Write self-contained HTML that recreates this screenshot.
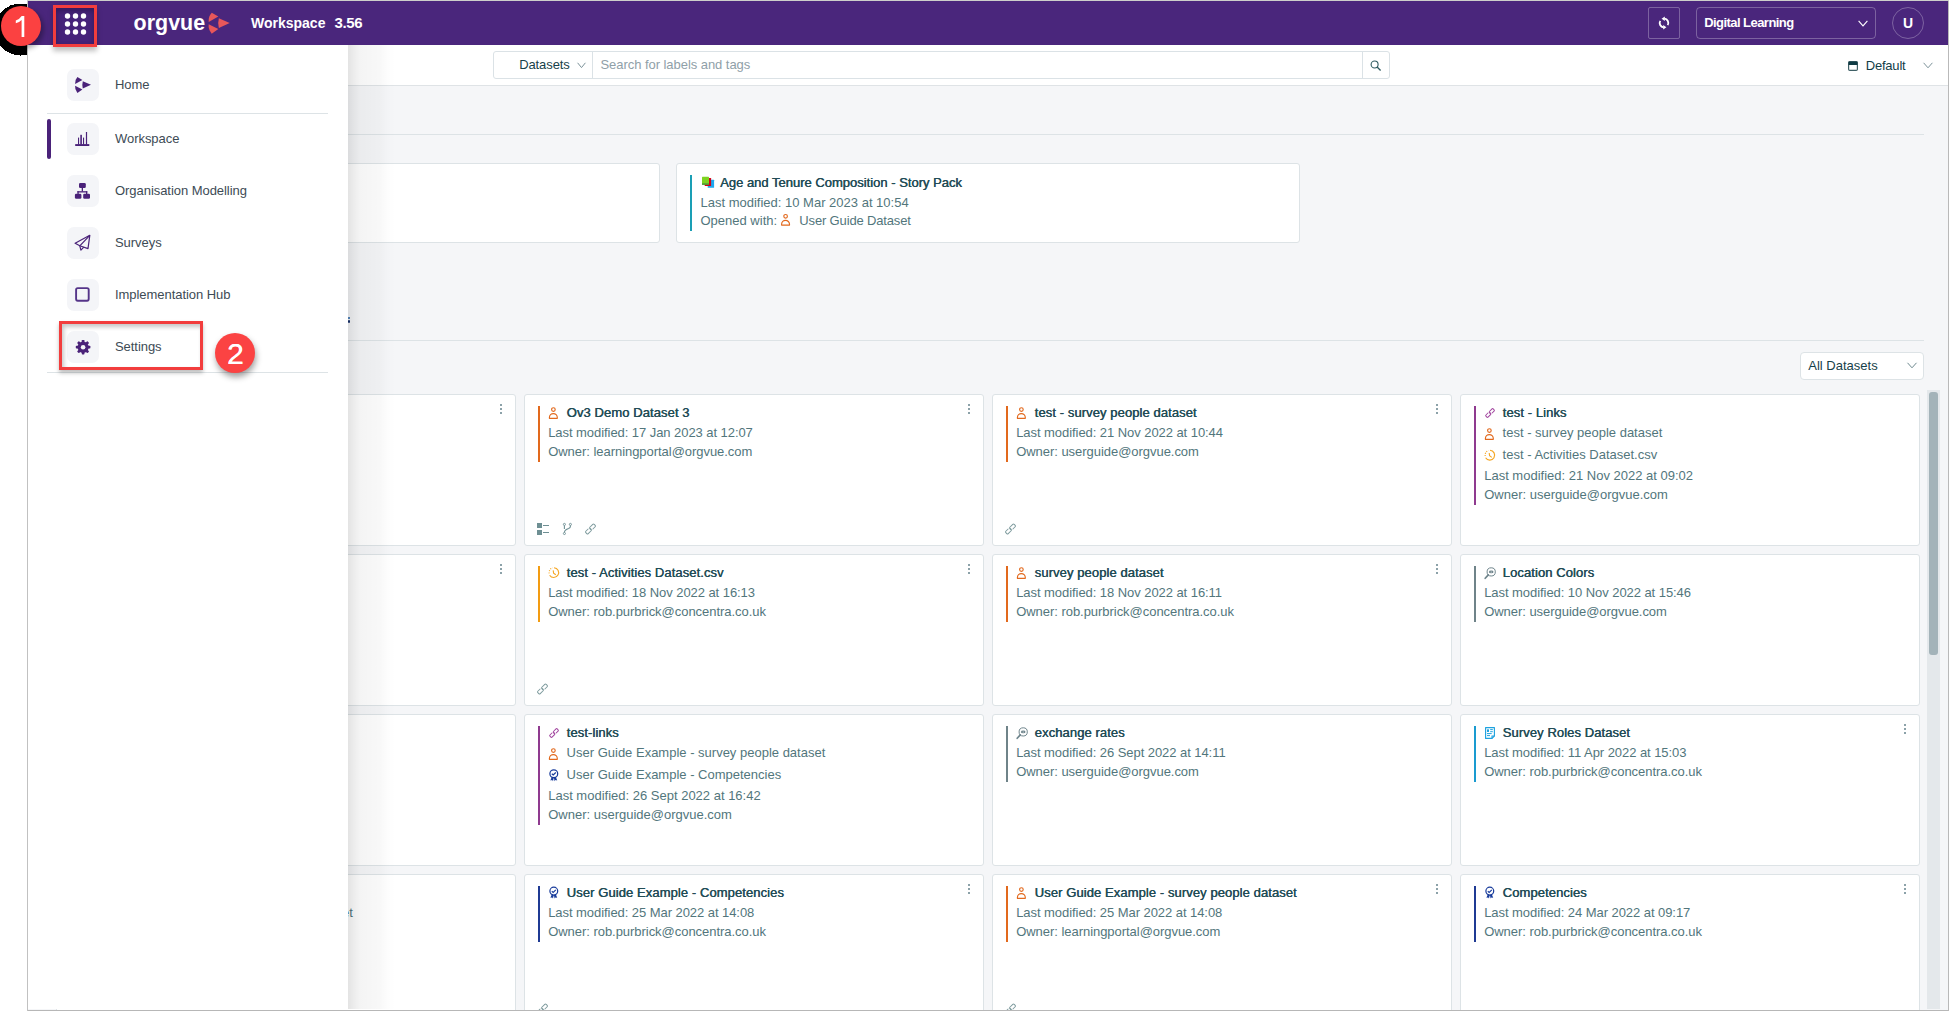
<!DOCTYPE html>
<html><head><meta charset="utf-8">
<style>
html,body{margin:0;padding:0;}
body{width:1949px;height:1011px;position:relative;overflow:hidden;background:#fff;font-family:"Liberation Sans", sans-serif;}
.t{position:absolute;white-space:nowrap;line-height:16px;}
.i{position:absolute;overflow:visible;}
.card{position:absolute;box-sizing:border-box;background:#fff;border:1px solid #dde3e6;border-radius:3px;}
.acc{position:absolute;width:2px;}
.abs{position:absolute;}
</style></head><body>
<!-- black artifact behind annotation 1 -->
<svg class="i" style="left:0;top:0" width="28" height="60" shape-rendering="crispEdges"><circle cx="20.5" cy="29.5" r="26" fill="#000"/></svg>
<!-- frame -->
<div class="abs" style="left:27px;top:0;width:1922px;height:1011px;box-sizing:border-box;border:1px solid #a8a8a8;background:#f5f6f8"></div>
<!-- header -->
<div class="abs" style="left:28px;top:1px;width:1920px;height:44px;background:#4a267c"></div>
<!-- subbar -->
<div class="abs" style="left:28px;top:45px;width:1920px;height:40px;background:#fff;border-bottom:1px solid #dfe3e6"></div>

<!-- content -->
<div class="abs" style="left:56px;top:134px;width:1868px;height:1px;background:#dde3e6"></div>
<div class="card" style="left:56px;top:163px;width:604px;height:80px"></div>
<div class="card" style="left:676px;top:163px;width:624px;height:80px"></div>
<div class="acc" style="left:690px;top:175px;height:56px;background:#1a9fb5"></div>
<svg class="i" style="left:702px;top:176px;" width="14" height="12" viewBox="0 0 14 12"><g transform="translate(0.00 0.80)"><rect x="5.7" y="2.9" width="6.4" height="8" rx="0.5" fill="#1ea7ef"/><rect x="2.7" y="1.2" width="6.4" height="8" rx="0.5" fill="#d0021b"/><rect x="0" y="0" width="7" height="8" rx="0.5" fill="#7ed321"/><rect x="0" y="6.6" width="7" height="1.4" fill="#4a8f3a"/></g></svg>
<div class="t" style="left:720px;top:174.80px;font-size:13px;color:#224c56;font-weight:normal;letter-spacing:0px;text-shadow:0.4px 0 0 #224c56;">Age and Tenure Composition - Story Pack</div>
<div class="t" style="left:700.5px;top:195.30px;font-size:13px;color:#52767c;font-weight:normal;letter-spacing:0px;">Last modified: 10 Mar 2023 at 10:54</div>
<div class="t" style="left:700.5px;top:213.00px;font-size:13px;color:#52767c;font-weight:normal;letter-spacing:0px;">Opened with:</div>
<svg class="i" style="left:781px;top:214px;" width="10" height="12" viewBox="0 0 10 12"><circle cx="4.6" cy="2.3" r="1.8" fill="none" stroke="#e2691d" stroke-width="1.15"/><path d="M0.6 11.1 V10.3 A3.95 3.95 0 0 1 8.5 10.3 V11.1 Z" fill="none" stroke="#e2691d" stroke-width="1.15" stroke-linejoin="round"/></svg>
<div class="t" style="left:799.3px;top:213.00px;font-size:13px;color:#52767c;font-weight:normal;letter-spacing:-0.15px;">User Guide Dataset</div>
<div class="abs" style="left:56px;top:340px;width:1868px;height:1px;background:#dde3e6"></div>
<div class="abs" style="left:1800px;top:352px;width:124px;height:28px;box-sizing:border-box;border:1px solid #dde3e6;border-radius:4px;background:#fff"></div>
<div class="t" style="left:1808.3px;top:358.00px;font-size:13px;color:#163f4a;font-weight:normal;letter-spacing:0px;">All Datasets</div>
<svg class="i" style="left:1907px;top:362px" width="10" height="7"><path d="M0.5 0.8 L5 5.8 L9.5 0.8" fill="none" stroke="#6f8a90" stroke-width="1"/></svg>
<div class="card" style="left:56px;top:394px;width:460px;height:152px"></div>
<svg class="i" style="left:500px;top:404px;" width="2" height="10" viewBox="0 0 2 10"><rect x="0" y="0" width="2" height="2" fill="#8ca2a9"/><rect x="0" y="4" width="2" height="2" fill="#8ca2a9"/><rect x="0" y="8" width="2" height="2" fill="#8ca2a9"/></svg>
<div class="card" style="left:524px;top:394px;width:460px;height:152px"></div>
<svg class="i" style="left:968px;top:404px;" width="2" height="10" viewBox="0 0 2 10"><rect x="0" y="0" width="2" height="2" fill="#8ca2a9"/><rect x="0" y="4" width="2" height="2" fill="#8ca2a9"/><rect x="0" y="8" width="2" height="2" fill="#8ca2a9"/></svg>
<div class="acc" style="left:538px;top:406px;height:56px;background:#e2691d"></div>
<svg class="i" style="left:548px;top:407px;" width="10" height="12" viewBox="0 0 10 12"><g transform="translate(0.80 0.20)"><circle cx="4.6" cy="2.3" r="1.8" fill="none" stroke="#e2691d" stroke-width="1.15"/><path d="M0.6 11.1 V10.3 A3.95 3.95 0 0 1 8.5 10.3 V11.1 Z" fill="none" stroke="#e2691d" stroke-width="1.15" stroke-linejoin="round"/></g></svg>
<div class="t" style="left:566.6px;top:405.00px;font-size:13px;color:#224c56;font-weight:normal;letter-spacing:0.08px;text-shadow:0.4px 0 0 #224c56;">Ov3 Demo Dataset 3</div>
<div class="t" style="left:548.2px;top:424.50px;font-size:13px;color:#52767c;font-weight:normal;letter-spacing:-0.06px;">Last modified: 17 Jan 2023 at 12:07</div>
<div class="t" style="left:548.2px;top:444.00px;font-size:13px;color:#52767c;font-weight:normal;letter-spacing:-0.04px;">Owner: learningportal@orgvue.com</div>
<svg class="i" style="left:537px;top:523px;" width="12" height="12" viewBox="0 0 12 12"><rect x="0" y="0" width="5" height="5" fill="#6e8f93"/><rect x="0" y="7" width="5" height="5" fill="#6e8f93"/><path d="M6 2.5 H12 M6 9.5 H12" stroke="#6e8f93" stroke-width="1.1"/></svg>
<svg class="i" style="left:563px;top:523px;" width="10" height="13" viewBox="0 0 10 13"><circle cx="1.4" cy="1.4" r="1.05" fill="none" stroke="#6e8f93" stroke-width="0.9"/><circle cx="7.4" cy="1.4" r="1.05" fill="none" stroke="#6e8f93" stroke-width="0.9"/><circle cx="1.4" cy="10.5" r="1.05" fill="none" stroke="#6e8f93" stroke-width="0.9"/><path d="M1.4 2.5 V6 M7.4 2.5 V3.6 Q7.4 4.8 5.6 5.6 Q1.6 7 1.4 9.4" fill="none" stroke="#6e8f93" stroke-width="1.1"/></svg>
<svg class="i" style="left:584px;top:523px;" width="12" height="12" viewBox="0 0 12 12"><g transform="translate(0.50 0.00)"><g transform="scale(1.0) rotate(-45 6 6)" fill="none" stroke="#7d9a9d" stroke-width="1.00" stroke-linecap="round"><path d="M4.3 4.3 H1.1 Q0.1 4.3 0.1 5.3 V6.7 Q0.1 7.7 1.1 7.7 H5.2 Q6.2 7.7 6.2 6.7 V5.7"/><path d="M7.7 7.7 H10.9 Q11.9 7.7 11.9 6.7 V5.3 Q11.9 4.3 10.9 4.3 H6.8 Q5.8 4.3 5.8 5.3 V6.3"/></g></g></svg>
<div class="card" style="left:992px;top:394px;width:460px;height:152px"></div>
<svg class="i" style="left:1436px;top:404px;" width="2" height="10" viewBox="0 0 2 10"><rect x="0" y="0" width="2" height="2" fill="#8ca2a9"/><rect x="0" y="4" width="2" height="2" fill="#8ca2a9"/><rect x="0" y="8" width="2" height="2" fill="#8ca2a9"/></svg>
<div class="acc" style="left:1006px;top:406px;height:56px;background:#e2691d"></div>
<svg class="i" style="left:1016px;top:407px;" width="10" height="12" viewBox="0 0 10 12"><g transform="translate(0.80 0.20)"><circle cx="4.6" cy="2.3" r="1.8" fill="none" stroke="#e2691d" stroke-width="1.15"/><path d="M0.6 11.1 V10.3 A3.95 3.95 0 0 1 8.5 10.3 V11.1 Z" fill="none" stroke="#e2691d" stroke-width="1.15" stroke-linejoin="round"/></g></svg>
<div class="t" style="left:1034.6px;top:405.00px;font-size:13px;color:#224c56;font-weight:normal;letter-spacing:0.08px;text-shadow:0.4px 0 0 #224c56;">test - survey people dataset</div>
<div class="t" style="left:1016.2px;top:424.50px;font-size:13px;color:#52767c;font-weight:normal;letter-spacing:-0.06px;">Last modified: 21 Nov 2022 at 10:44</div>
<div class="t" style="left:1016.2px;top:444.00px;font-size:13px;color:#52767c;font-weight:normal;letter-spacing:-0.04px;">Owner: userguide@orgvue.com</div>
<svg class="i" style="left:1004px;top:523px;" width="12" height="12" viewBox="0 0 12 12"><g transform="translate(0.50 0.00)"><g transform="scale(1.0) rotate(-45 6 6)" fill="none" stroke="#7d9a9d" stroke-width="1.00" stroke-linecap="round"><path d="M4.3 4.3 H1.1 Q0.1 4.3 0.1 5.3 V6.7 Q0.1 7.7 1.1 7.7 H5.2 Q6.2 7.7 6.2 6.7 V5.7"/><path d="M7.7 7.7 H10.9 Q11.9 7.7 11.9 6.7 V5.3 Q11.9 4.3 10.9 4.3 H6.8 Q5.8 4.3 5.8 5.3 V6.3"/></g></g></svg>
<div class="card" style="left:1460px;top:394px;width:460px;height:152px"></div>
<div class="acc" style="left:1474px;top:406px;height:99px;background:#8f3a8f"></div>
<svg class="i" style="left:1484px;top:407px;" width="12" height="12" viewBox="0 0 12 12"><g transform="translate(0.80 0.80)"><g transform="scale(0.87) rotate(-45 6 6)" fill="none" stroke="#a1449e" stroke-width="1.15" stroke-linecap="round"><path d="M4.3 4.3 H1.1 Q0.1 4.3 0.1 5.3 V6.7 Q0.1 7.7 1.1 7.7 H5.2 Q6.2 7.7 6.2 6.7 V5.7"/><path d="M7.7 7.7 H10.9 Q11.9 7.7 11.9 6.7 V5.3 Q11.9 4.3 10.9 4.3 H6.8 Q5.8 4.3 5.8 5.3 V6.3"/></g></g></svg>
<div class="t" style="left:1502.6px;top:405.00px;font-size:13px;color:#224c56;font-weight:normal;letter-spacing:0.08px;text-shadow:0.4px 0 0 #224c56;">test - Links</div>
<svg class="i" style="left:1484px;top:428px;" width="10" height="12" viewBox="0 0 10 12"><g transform="translate(0.80 0.20)"><circle cx="4.6" cy="2.3" r="1.8" fill="none" stroke="#e2691d" stroke-width="1.15"/><path d="M0.6 11.1 V10.3 A3.95 3.95 0 0 1 8.5 10.3 V11.1 Z" fill="none" stroke="#e2691d" stroke-width="1.15" stroke-linejoin="round"/></g></svg>
<div class="t" style="left:1502.6px;top:425.00px;font-size:13px;color:#52767c;font-weight:normal;letter-spacing:0px;">test - survey people dataset</div>
<svg class="i" style="left:1484px;top:449px;" width="12" height="12" viewBox="0 0 12 12"><g transform="translate(0.00 0.60)"><path d="M6 0.7 A4.9 4.9 0 1 1 1.6 8.2" fill="none" stroke="#f5a623" stroke-width="1.15"/><path d="M1.2 6.4 A4.9 4.9 0 0 1 4.4 0.9" fill="none" stroke="#f5a623" stroke-width="1.15" stroke-dasharray="1 1.2"/><path d="M5.2 3.4 L5.6 6.2 L7.8 7.8" fill="none" stroke="#f5a623" stroke-width="1.1"/></g></svg>
<div class="t" style="left:1502.6px;top:446.60px;font-size:13px;color:#52767c;font-weight:normal;letter-spacing:0px;">test - Activities Dataset.csv</div>
<div class="t" style="left:1484.2px;top:468.00px;font-size:13px;color:#52767c;font-weight:normal;letter-spacing:0px;">Last modified: 21 Nov 2022 at 09:02</div>
<div class="t" style="left:1484.2px;top:486.80px;font-size:13px;color:#52767c;font-weight:normal;letter-spacing:0px;">Owner: userguide@orgvue.com</div>
<div class="card" style="left:56px;top:554px;width:460px;height:152px"></div>
<svg class="i" style="left:500px;top:564px;" width="2" height="10" viewBox="0 0 2 10"><rect x="0" y="0" width="2" height="2" fill="#8ca2a9"/><rect x="0" y="4" width="2" height="2" fill="#8ca2a9"/><rect x="0" y="8" width="2" height="2" fill="#8ca2a9"/></svg>
<div class="card" style="left:524px;top:554px;width:460px;height:152px"></div>
<svg class="i" style="left:968px;top:564px;" width="2" height="10" viewBox="0 0 2 10"><rect x="0" y="0" width="2" height="2" fill="#8ca2a9"/><rect x="0" y="4" width="2" height="2" fill="#8ca2a9"/><rect x="0" y="8" width="2" height="2" fill="#8ca2a9"/></svg>
<div class="acc" style="left:538px;top:566px;height:56px;background:#f39c12"></div>
<svg class="i" style="left:548px;top:567px;" width="12" height="12" viewBox="0 0 12 12"><path d="M6 0.7 A4.9 4.9 0 1 1 1.6 8.2" fill="none" stroke="#f5a623" stroke-width="1.15"/><path d="M1.2 6.4 A4.9 4.9 0 0 1 4.4 0.9" fill="none" stroke="#f5a623" stroke-width="1.15" stroke-dasharray="1 1.2"/><path d="M5.2 3.4 L5.6 6.2 L7.8 7.8" fill="none" stroke="#f5a623" stroke-width="1.1"/></svg>
<div class="t" style="left:566.6px;top:565.00px;font-size:13px;color:#224c56;font-weight:normal;letter-spacing:0.08px;text-shadow:0.4px 0 0 #224c56;">test - Activities Dataset.csv</div>
<div class="t" style="left:548.2px;top:584.50px;font-size:13px;color:#52767c;font-weight:normal;letter-spacing:-0.06px;">Last modified: 18 Nov 2022 at 16:13</div>
<div class="t" style="left:548.2px;top:604.00px;font-size:13px;color:#52767c;font-weight:normal;letter-spacing:-0.04px;">Owner: rob.purbrick@concentra.co.uk</div>
<svg class="i" style="left:536px;top:683px;" width="12" height="12" viewBox="0 0 12 12"><g transform="translate(0.50 0.00)"><g transform="scale(1.0) rotate(-45 6 6)" fill="none" stroke="#7d9a9d" stroke-width="1.00" stroke-linecap="round"><path d="M4.3 4.3 H1.1 Q0.1 4.3 0.1 5.3 V6.7 Q0.1 7.7 1.1 7.7 H5.2 Q6.2 7.7 6.2 6.7 V5.7"/><path d="M7.7 7.7 H10.9 Q11.9 7.7 11.9 6.7 V5.3 Q11.9 4.3 10.9 4.3 H6.8 Q5.8 4.3 5.8 5.3 V6.3"/></g></g></svg>
<div class="card" style="left:992px;top:554px;width:460px;height:152px"></div>
<svg class="i" style="left:1436px;top:564px;" width="2" height="10" viewBox="0 0 2 10"><rect x="0" y="0" width="2" height="2" fill="#8ca2a9"/><rect x="0" y="4" width="2" height="2" fill="#8ca2a9"/><rect x="0" y="8" width="2" height="2" fill="#8ca2a9"/></svg>
<div class="acc" style="left:1006px;top:566px;height:56px;background:#e2691d"></div>
<svg class="i" style="left:1016px;top:567px;" width="10" height="12" viewBox="0 0 10 12"><g transform="translate(0.80 0.20)"><circle cx="4.6" cy="2.3" r="1.8" fill="none" stroke="#e2691d" stroke-width="1.15"/><path d="M0.6 11.1 V10.3 A3.95 3.95 0 0 1 8.5 10.3 V11.1 Z" fill="none" stroke="#e2691d" stroke-width="1.15" stroke-linejoin="round"/></g></svg>
<div class="t" style="left:1034.6px;top:565.00px;font-size:13px;color:#224c56;font-weight:normal;letter-spacing:0.08px;text-shadow:0.4px 0 0 #224c56;">survey people dataset</div>
<div class="t" style="left:1016.2px;top:584.50px;font-size:13px;color:#52767c;font-weight:normal;letter-spacing:-0.06px;">Last modified: 18 Nov 2022 at 16:11</div>
<div class="t" style="left:1016.2px;top:604.00px;font-size:13px;color:#52767c;font-weight:normal;letter-spacing:-0.04px;">Owner: rob.purbrick@concentra.co.uk</div>
<div class="card" style="left:1460px;top:554px;width:460px;height:152px"></div>
<div class="acc" style="left:1474px;top:566px;height:56px;background:#6f8389"></div>
<svg class="i" style="left:1484px;top:567px;" width="12" height="13" viewBox="0 0 12 13"><circle cx="7.2" cy="4.9" r="4.1" fill="none" stroke="#6f858c" stroke-width="1"/><ellipse cx="7.2" cy="4.9" rx="2.3" ry="1.4" fill="#6f858c"/><circle cx="7.2" cy="4.9" r="0.5" fill="#fff"/><path d="M4.3 7.9 L1.2 11.3" stroke="#6f858c" stroke-width="1.7" stroke-linecap="round"/></svg>
<div class="t" style="left:1502.6px;top:565.00px;font-size:13px;color:#224c56;font-weight:normal;letter-spacing:0.08px;text-shadow:0.4px 0 0 #224c56;">Location Colors</div>
<div class="t" style="left:1484.2px;top:584.50px;font-size:13px;color:#52767c;font-weight:normal;letter-spacing:-0.06px;">Last modified: 10 Nov 2022 at 15:46</div>
<div class="t" style="left:1484.2px;top:604.00px;font-size:13px;color:#52767c;font-weight:normal;letter-spacing:-0.04px;">Owner: userguide@orgvue.com</div>
<div class="card" style="left:56px;top:714px;width:460px;height:152px"></div>
<div class="card" style="left:524px;top:714px;width:460px;height:152px"></div>
<div class="acc" style="left:538px;top:726px;height:99px;background:#8f3a8f"></div>
<svg class="i" style="left:548px;top:727px;" width="12" height="12" viewBox="0 0 12 12"><g transform="translate(0.80 0.80)"><g transform="scale(0.87) rotate(-45 6 6)" fill="none" stroke="#a1449e" stroke-width="1.15" stroke-linecap="round"><path d="M4.3 4.3 H1.1 Q0.1 4.3 0.1 5.3 V6.7 Q0.1 7.7 1.1 7.7 H5.2 Q6.2 7.7 6.2 6.7 V5.7"/><path d="M7.7 7.7 H10.9 Q11.9 7.7 11.9 6.7 V5.3 Q11.9 4.3 10.9 4.3 H6.8 Q5.8 4.3 5.8 5.3 V6.3"/></g></g></svg>
<div class="t" style="left:566.6px;top:725.00px;font-size:13px;color:#224c56;font-weight:normal;letter-spacing:0.08px;text-shadow:0.4px 0 0 #224c56;">test-links</div>
<svg class="i" style="left:548px;top:748px;" width="10" height="12" viewBox="0 0 10 12"><g transform="translate(0.80 0.20)"><circle cx="4.6" cy="2.3" r="1.8" fill="none" stroke="#e2691d" stroke-width="1.15"/><path d="M0.6 11.1 V10.3 A3.95 3.95 0 0 1 8.5 10.3 V11.1 Z" fill="none" stroke="#e2691d" stroke-width="1.15" stroke-linejoin="round"/></g></svg>
<div class="t" style="left:566.6px;top:745.00px;font-size:13px;color:#52767c;font-weight:normal;letter-spacing:0px;">User Guide Example - survey people dataset</div>
<svg class="i" style="left:549px;top:769px;" width="11" height="12" viewBox="0 0 11 12"><g transform="translate(0.00 0.60)"><circle cx="4.8" cy="4.1" r="3.9" fill="none" stroke="#1a3d9c" stroke-width="1.25"/><path d="M2.8 4.2 L4.2 5.4 L6.8 2.9" fill="none" stroke="#1a3d9c" stroke-width="1.2"/><path d="M2.7 7.4 L1.4 10.8 L3.2 10.4 L4 11.6 L4.7 8.1 Z M6.9 7.4 L8.2 10.8 L6.4 10.4 L5.6 11.6 L4.9 8.1 Z" fill="#1a3d9c"/></g></svg>
<div class="t" style="left:566.6px;top:766.60px;font-size:13px;color:#52767c;font-weight:normal;letter-spacing:0px;">User Guide Example - Competencies</div>
<div class="t" style="left:548.2px;top:788.00px;font-size:13px;color:#52767c;font-weight:normal;letter-spacing:0px;">Last modified: 26 Sept 2022 at 16:42</div>
<div class="t" style="left:548.2px;top:806.80px;font-size:13px;color:#52767c;font-weight:normal;letter-spacing:0px;">Owner: userguide@orgvue.com</div>
<div class="card" style="left:992px;top:714px;width:460px;height:152px"></div>
<div class="acc" style="left:1006px;top:726px;height:56px;background:#6f8389"></div>
<svg class="i" style="left:1016px;top:727px;" width="12" height="13" viewBox="0 0 12 13"><circle cx="7.2" cy="4.9" r="4.1" fill="none" stroke="#6f858c" stroke-width="1"/><ellipse cx="7.2" cy="4.9" rx="2.3" ry="1.4" fill="#6f858c"/><circle cx="7.2" cy="4.9" r="0.5" fill="#fff"/><path d="M4.3 7.9 L1.2 11.3" stroke="#6f858c" stroke-width="1.7" stroke-linecap="round"/></svg>
<div class="t" style="left:1034.6px;top:725.00px;font-size:13px;color:#224c56;font-weight:normal;letter-spacing:0.08px;text-shadow:0.4px 0 0 #224c56;">exchange rates</div>
<div class="t" style="left:1016.2px;top:744.50px;font-size:13px;color:#52767c;font-weight:normal;letter-spacing:-0.06px;">Last modified: 26 Sept 2022 at 14:11</div>
<div class="t" style="left:1016.2px;top:764.00px;font-size:13px;color:#52767c;font-weight:normal;letter-spacing:-0.04px;">Owner: userguide@orgvue.com</div>
<div class="card" style="left:1460px;top:714px;width:460px;height:152px"></div>
<svg class="i" style="left:1904px;top:724px;" width="2" height="10" viewBox="0 0 2 10"><rect x="0" y="0" width="2" height="2" fill="#8ca2a9"/><rect x="0" y="4" width="2" height="2" fill="#8ca2a9"/><rect x="0" y="8" width="2" height="2" fill="#8ca2a9"/></svg>
<div class="acc" style="left:1474px;top:726px;height:56px;background:#1a9bd0"></div>
<svg class="i" style="left:1485px;top:727px;" width="11" height="13" viewBox="0 0 11 13"><path d="M0.6 0.6 H9.4 V9 L7 11.4 H0.6 Z" fill="none" stroke="#1ea2df" stroke-width="1.15" stroke-linejoin="round"/><path d="M9.4 9 H7 V11.4" fill="none" stroke="#1ea2df" stroke-width="1.1"/><rect x="2" y="2.2" width="2" height="2.8" rx="0.5" fill="#1ea2df"/><path d="M5.2 2.6 H7.8 M5.2 4.7 H7.8 M2 6.6 H6.7 M2 8.6 H5" stroke="#1ea2df" stroke-width="1"/></svg>
<div class="t" style="left:1502.6px;top:725.00px;font-size:13px;color:#224c56;font-weight:normal;letter-spacing:0.08px;text-shadow:0.4px 0 0 #224c56;">Survey Roles Dataset</div>
<div class="t" style="left:1484.2px;top:744.50px;font-size:13px;color:#52767c;font-weight:normal;letter-spacing:-0.06px;">Last modified: 11 Apr 2022 at 15:03</div>
<div class="t" style="left:1484.2px;top:764.00px;font-size:13px;color:#52767c;font-weight:normal;letter-spacing:-0.04px;">Owner: rob.purbrick@concentra.co.uk</div>
<div class="card" style="left:56px;top:874px;width:460px;height:152px"></div>
<div class="card" style="left:524px;top:874px;width:460px;height:152px"></div>
<svg class="i" style="left:968px;top:884px;" width="2" height="10" viewBox="0 0 2 10"><rect x="0" y="0" width="2" height="2" fill="#8ca2a9"/><rect x="0" y="4" width="2" height="2" fill="#8ca2a9"/><rect x="0" y="8" width="2" height="2" fill="#8ca2a9"/></svg>
<div class="acc" style="left:538px;top:886px;height:56px;background:#1f3a93"></div>
<svg class="i" style="left:549px;top:887px;" width="11" height="12" viewBox="0 0 11 12"><circle cx="4.8" cy="4.1" r="3.9" fill="none" stroke="#1a3d9c" stroke-width="1.25"/><path d="M2.8 4.2 L4.2 5.4 L6.8 2.9" fill="none" stroke="#1a3d9c" stroke-width="1.2"/><path d="M2.7 7.4 L1.4 10.8 L3.2 10.4 L4 11.6 L4.7 8.1 Z M6.9 7.4 L8.2 10.8 L6.4 10.4 L5.6 11.6 L4.9 8.1 Z" fill="#1a3d9c"/></svg>
<div class="t" style="left:566.6px;top:885.00px;font-size:13px;color:#224c56;font-weight:normal;letter-spacing:0.08px;text-shadow:0.4px 0 0 #224c56;">User Guide Example - Competencies</div>
<div class="t" style="left:548.2px;top:904.50px;font-size:13px;color:#52767c;font-weight:normal;letter-spacing:-0.06px;">Last modified: 25 Mar 2022 at 14:08</div>
<div class="t" style="left:548.2px;top:924.00px;font-size:13px;color:#52767c;font-weight:normal;letter-spacing:-0.04px;">Owner: rob.purbrick@concentra.co.uk</div>
<svg class="i" style="left:536px;top:1003px;" width="12" height="12" viewBox="0 0 12 12"><g transform="translate(0.50 0.00)"><g transform="scale(1.0) rotate(-45 6 6)" fill="none" stroke="#7d9a9d" stroke-width="1.00" stroke-linecap="round"><path d="M4.3 4.3 H1.1 Q0.1 4.3 0.1 5.3 V6.7 Q0.1 7.7 1.1 7.7 H5.2 Q6.2 7.7 6.2 6.7 V5.7"/><path d="M7.7 7.7 H10.9 Q11.9 7.7 11.9 6.7 V5.3 Q11.9 4.3 10.9 4.3 H6.8 Q5.8 4.3 5.8 5.3 V6.3"/></g></g></svg>
<div class="card" style="left:992px;top:874px;width:460px;height:152px"></div>
<svg class="i" style="left:1436px;top:884px;" width="2" height="10" viewBox="0 0 2 10"><rect x="0" y="0" width="2" height="2" fill="#8ca2a9"/><rect x="0" y="4" width="2" height="2" fill="#8ca2a9"/><rect x="0" y="8" width="2" height="2" fill="#8ca2a9"/></svg>
<div class="acc" style="left:1006px;top:886px;height:56px;background:#e2691d"></div>
<svg class="i" style="left:1016px;top:887px;" width="10" height="12" viewBox="0 0 10 12"><g transform="translate(0.80 0.20)"><circle cx="4.6" cy="2.3" r="1.8" fill="none" stroke="#e2691d" stroke-width="1.15"/><path d="M0.6 11.1 V10.3 A3.95 3.95 0 0 1 8.5 10.3 V11.1 Z" fill="none" stroke="#e2691d" stroke-width="1.15" stroke-linejoin="round"/></g></svg>
<div class="t" style="left:1034.6px;top:885.00px;font-size:13px;color:#224c56;font-weight:normal;letter-spacing:0.08px;text-shadow:0.4px 0 0 #224c56;">User Guide Example - survey people dataset</div>
<div class="t" style="left:1016.2px;top:904.50px;font-size:13px;color:#52767c;font-weight:normal;letter-spacing:-0.06px;">Last modified: 25 Mar 2022 at 14:08</div>
<div class="t" style="left:1016.2px;top:924.00px;font-size:13px;color:#52767c;font-weight:normal;letter-spacing:-0.04px;">Owner: learningportal@orgvue.com</div>
<svg class="i" style="left:1004px;top:1003px;" width="12" height="12" viewBox="0 0 12 12"><g transform="translate(0.50 0.00)"><g transform="scale(1.0) rotate(-45 6 6)" fill="none" stroke="#7d9a9d" stroke-width="1.00" stroke-linecap="round"><path d="M4.3 4.3 H1.1 Q0.1 4.3 0.1 5.3 V6.7 Q0.1 7.7 1.1 7.7 H5.2 Q6.2 7.7 6.2 6.7 V5.7"/><path d="M7.7 7.7 H10.9 Q11.9 7.7 11.9 6.7 V5.3 Q11.9 4.3 10.9 4.3 H6.8 Q5.8 4.3 5.8 5.3 V6.3"/></g></g></svg>
<div class="card" style="left:1460px;top:874px;width:460px;height:152px"></div>
<svg class="i" style="left:1904px;top:884px;" width="2" height="10" viewBox="0 0 2 10"><rect x="0" y="0" width="2" height="2" fill="#8ca2a9"/><rect x="0" y="4" width="2" height="2" fill="#8ca2a9"/><rect x="0" y="8" width="2" height="2" fill="#8ca2a9"/></svg>
<div class="acc" style="left:1474px;top:886px;height:56px;background:#1f3a93"></div>
<svg class="i" style="left:1485px;top:887px;" width="11" height="12" viewBox="0 0 11 12"><circle cx="4.8" cy="4.1" r="3.9" fill="none" stroke="#1a3d9c" stroke-width="1.25"/><path d="M2.8 4.2 L4.2 5.4 L6.8 2.9" fill="none" stroke="#1a3d9c" stroke-width="1.2"/><path d="M2.7 7.4 L1.4 10.8 L3.2 10.4 L4 11.6 L4.7 8.1 Z M6.9 7.4 L8.2 10.8 L6.4 10.4 L5.6 11.6 L4.9 8.1 Z" fill="#1a3d9c"/></svg>
<div class="t" style="left:1502.6px;top:885.00px;font-size:13px;color:#224c56;font-weight:normal;letter-spacing:0.08px;text-shadow:0.4px 0 0 #224c56;">Competencies</div>
<div class="t" style="left:1484.2px;top:904.50px;font-size:13px;color:#52767c;font-weight:normal;letter-spacing:-0.06px;">Last modified: 24 Mar 2022 at 09:17</div>
<div class="t" style="left:1484.2px;top:924.00px;font-size:13px;color:#52767c;font-weight:normal;letter-spacing:-0.04px;">Owner: rob.purbrick@concentra.co.uk</div>
<div class="abs" style="left:348px;top:317px;width:2px;height:2px;background:#1d5fa8;border-radius:1px"></div><div class="abs" style="left:348px;top:320px;width:2px;height:3px;background:#17306b;border-radius:1px"></div>
<div class="t" style="left:342px;top:905.00px;font-size:13px;color:#52767c;font-weight:normal;letter-spacing:0px;">et</div>
<!-- scrollbar -->
<div class="abs" style="left:1927px;top:390px;width:13px;height:619px;background:#e4e8eb"></div>
<div class="abs" style="left:1929px;top:392px;width:9px;height:263px;background:#a3b3b9;border-radius:3px"></div>


<!-- header contents -->
<div class="abs" style="left:56px;top:8px;width:38px;height:36px;background:#46237a;box-shadow:inset 0 4px 4px rgba(0,0,0,0.18), inset 3px 0 4px rgba(0,0,0,0.06), inset -3px 0 4px rgba(0,0,0,0.06)"></div>
<svg class="i" style="left:62px;top:11px" width="27" height="27">
 <g fill="#fff">
 <circle cx="5.5" cy="5" r="2.7"/><circle cx="13.5" cy="5" r="2.7"/><circle cx="21.5" cy="5" r="2.7"/>
 <circle cx="5.5" cy="13" r="2.7"/><circle cx="13.5" cy="13" r="2.7"/><circle cx="21.5" cy="13" r="2.7"/>
 <circle cx="5.5" cy="21" r="2.7"/><circle cx="13.5" cy="21" r="2.7"/><circle cx="21.5" cy="21" r="2.7"/>
 </g></svg>
<svg class="i" style="left:130px;top:8px" width="104" height="30" viewBox="0 0 104 30">
 <text x="3.6" y="21.8" font-family="Liberation Sans" font-weight="bold" font-size="21.5" fill="#fff" textLength="71.5" lengthAdjust="spacingAndGlyphs">orgvue</text>
 <g fill="#e8575a" transform="translate(77.9 4.0) scale(1.32)"><path d="M2.9 0.5 L7.9 3.5 L0.6 7.5 Q0.1 3.6 2.9 0.5 Z"/><path d="M0.6 9.3 L7.9 12.9 L2.9 16.5 Q0.1 13 0.6 9.3 Z"/><path d="M8.3 4.8 L16.5 8.3 L8.3 12.1 Q7.3 8.45 8.3 4.8 Z"/></g>
</svg>
<div class="t" style="left:251px;top:15.00px;font-size:14px;color:#fff;font-weight:bold;letter-spacing:0px;">Workspace</div>
<div class="t" style="left:334.4px;top:15.00px;font-size:15px;color:#fff;font-weight:bold;letter-spacing:-0.3px;">3.56</div>
<div class="abs" style="left:1648px;top:7px;width:32px;height:32px;box-sizing:border-box;border:1px solid rgba(255,255,255,0.28);border-radius:2px"></div>
<svg class="i" style="left:1658px;top:17.3px" width="12" height="12" viewBox="0 0 12 12">
 <path d="M6.4 1.7 A4.3 4.3 0 0 1 9.72 8.15" fill="none" stroke="#fff" stroke-width="1.8"/>
 <path d="M2.28 3.85 A4.3 4.3 0 0 0 5.6 10.3" fill="none" stroke="#fff" stroke-width="1.8"/>
 <path d="M3.6 1.7 L6.8 -0.5 L6.8 3.9 Z" fill="#fff"/><path d="M8.4 10.3 L5.2 8.1 L5.2 12.5 Z" fill="#fff"/>
</svg>
<div class="abs" style="left:1696px;top:7px;width:180px;height:32px;box-sizing:border-box;border:1px solid rgba(255,255,255,0.28);border-radius:4px"></div>
<div class="t" style="left:1704.2px;top:14.80px;font-size:13px;color:#fff;font-weight:bold;letter-spacing:-0.55px;">Digital Learning</div>
<svg class="i" style="left:1858px;top:20px" width="10" height="7"><path d="M0.6 0.8 L5 5.8 L9.4 0.8" fill="none" stroke="#fff" stroke-width="1.1"/></svg>
<div class="abs" style="left:1892px;top:7px;width:32px;height:32px;box-sizing:border-box;border:1px solid rgba(255,255,255,0.28);border-radius:50%"></div>
<div class="t" style="left:1903px;top:14.60px;font-size:14px;color:#fff;font-weight:bold;letter-spacing:0px;">U</div>

<!-- subbar contents -->
<div class="abs" style="left:493px;top:51px;width:897px;height:28px;box-sizing:border-box;border:1px solid #dbe2e6;border-radius:3px;background:#fff"></div>
<div class="abs" style="left:592px;top:52px;width:1px;height:26px;background:#dbe2e6"></div>
<div class="abs" style="left:1362px;top:52px;width:1px;height:26px;background:#dbe2e6"></div>
<div class="t" style="left:519.2px;top:56.90px;font-size:13px;color:#173f4a;font-weight:normal;letter-spacing:-0.1px;">Datasets</div>
<svg class="i" style="left:577px;top:62px" width="9" height="7"><path d="M0.6 0.8 L4.5 5.6 L8.4 0.8" fill="none" stroke="#7d939a" stroke-width="1"/></svg>
<div class="t" style="left:600.5px;top:57.00px;font-size:13px;color:#8fa0a8;font-weight:normal;letter-spacing:-0.05px;">Search for labels and tags</div>
<svg class="i" style="left:1369px;top:59px" width="13" height="13" viewBox="0 0 13 13"><circle cx="5.6" cy="5.5" r="3.5" fill="none" stroke="#2f5b60" stroke-width="1.1"/><path d="M8.1 8 L11.6 11.5" stroke="#2f5b60" stroke-width="1.3"/></svg>
<svg class="i" style="left:1848px;top:61px" width="10" height="10" viewBox="0 0 10 10"><rect x="0.6" y="0.6" width="8.8" height="8.8" rx="1.2" fill="none" stroke="#3f6066" stroke-width="1.2"/><rect x="0.6" y="0.6" width="8.8" height="3.4" fill="#0f3b44"/></svg>
<div class="t" style="left:1865.7px;top:58.00px;font-size:13px;color:#123e48;font-weight:normal;letter-spacing:-0.2px;">Default</div>
<svg class="i" style="left:1923px;top:62px" width="10" height="7"><path d="M0.6 0.8 L5 5.8 L9.4 0.8" fill="none" stroke="#7d939a" stroke-width="1"/></svg>

<div class="abs" style="left:348px;top:45px;width:50px;height:964px;background:linear-gradient(to right, rgba(0,0,0,0.11) 0px, rgba(0,0,0,0.08) 5px, rgba(0,0,0,0.045) 12px, rgba(0,0,0,0.027) 32px, rgba(0,0,0,0.008) 40px, rgba(0,0,0,0) 48px)"></div>
<div class="abs" style="left:28px;top:45px;width:320px;height:964px;background:#fff"></div>
<div class="abs" style="left:47px;top:113px;width:281px;height:1px;background:#dde3e6"></div>
<div class="abs" style="left:47px;top:372px;width:281px;height:1px;background:#dde3e6"></div>
<div class="abs" style="left:47px;top:119px;width:4px;height:40px;background:#4a2279;border-radius:2px"></div>
<div class="abs" style="left:67px;top:69px;width:32px;height:32px;background:#f4f5f8;border-radius:7px"></div>
<svg class="i" style="left:74px;top:76px;" width="17" height="17" viewBox="0 0 17 17"><g transform="translate(0.50 0.50)"><g fill="#4a2279"><path d="M2.9 0.5 L7.9 3.5 L0.6 7.5 Q0.1 3.6 2.9 0.5 Z"/><path d="M0.6 9.3 L7.9 12.9 L2.9 16.5 Q0.1 13 0.6 9.3 Z"/><path d="M8.3 4.8 L16.5 8.3 L8.3 12.1 Q7.3 8.45 8.3 4.8 Z"/></g></g></svg>
<div class="t" style="left:115px;top:77.00px;font-size:13px;color:#3d4b55;font-weight:normal;letter-spacing:-0.05px;">Home</div>
<div class="abs" style="left:67px;top:123px;width:32px;height:32px;background:#f4f5f8;border-radius:7px"></div>
<svg class="i" style="left:74px;top:132px;" width="16" height="15" viewBox="0 0 16 15"><g transform="translate(0.50 0.00)"><g fill="#4a2279"><rect x="0.7" y="12.1" width="14.1" height="1.9"/><rect x="3.5" y="5.6" width="1.1" height="7"/><rect x="5.8" y="2.8" width="1.6" height="9.8"/><rect x="8.5" y="5.6" width="1.1" height="7"/><rect x="11.4" y="0" width="1.2" height="12.5"/></g></g></svg>
<div class="t" style="left:115px;top:131.00px;font-size:13px;color:#3d4b55;font-weight:normal;letter-spacing:-0.05px;">Workspace</div>
<div class="abs" style="left:67px;top:175px;width:32px;height:32px;background:#f4f5f8;border-radius:7px"></div>
<svg class="i" style="left:74px;top:182px;" width="16" height="17" viewBox="0 0 16 17"><g transform="translate(0.50 0.50)"><g fill="#4a2279"><rect x="4.5" y="0.4" width="6.8" height="5.1" rx="1.3"/><rect x="0.4" y="11.3" width="6.5" height="4.9" rx="1.3"/><rect x="8.7" y="11.3" width="6.8" height="4.9" rx="1.3"/><rect x="7.2" y="5" width="1.3" height="4"/><rect x="2.9" y="8.7" width="9.9" height="1.3"/><rect x="2.9" y="8.7" width="1.3" height="3"/><rect x="11.5" y="8.7" width="1.3" height="3"/></g></g></svg>
<div class="t" style="left:115px;top:183.00px;font-size:13px;color:#3d4b55;font-weight:normal;letter-spacing:-0.05px;">Organisation Modelling</div>
<div class="abs" style="left:67px;top:227px;width:32px;height:32px;background:#f4f5f8;border-radius:7px"></div>
<svg class="i" style="left:74px;top:234px;" width="17" height="17" viewBox="0 0 17 17"><g transform="translate(0.50 0.50)"><g fill="none" stroke="#4a2279" stroke-width="1.2" stroke-linejoin="round"><path d="M15.3 0.8 L0.6 8.8 L5.3 11.3 L13.5 14.1 Z"/><path d="M15.3 0.8 L5.3 11.3 L6.4 15.6 L9.3 12.7"/></g></g></svg>
<div class="t" style="left:115px;top:235.00px;font-size:13px;color:#3d4b55;font-weight:normal;letter-spacing:-0.05px;">Surveys</div>
<div class="abs" style="left:67px;top:279px;width:32px;height:32px;background:#f4f5f8;border-radius:7px"></div>
<svg class="i" style="left:75px;top:287px;" width="15" height="15" viewBox="0 0 15 15"><g transform="translate(0.50 0.50)"><rect x="0.6" y="0.6" width="12.6" height="12.6" rx="1.6" fill="none" stroke="#553589" stroke-width="1.9"/></g></svg>
<div class="t" style="left:115px;top:287.00px;font-size:13px;color:#3d4b55;font-weight:normal;letter-spacing:-0.05px;">Implementation Hub</div>
<div class="abs" style="left:67px;top:331px;width:32px;height:32px;background:#f4f5f8;border-radius:7px"></div>
<svg class="i" style="left:75px;top:339px;" width="15" height="15" viewBox="0 0 15 15"><g transform="translate(0.60 0.70)"><g fill="#4a2279"><rect x="6.15" y="0.2" width="2.7" height="3" rx="0.7" transform="rotate(0 7.5 7.5)"/><rect x="6.15" y="0.2" width="2.7" height="3" rx="0.7" transform="rotate(45 7.5 7.5)"/><rect x="6.15" y="0.2" width="2.7" height="3" rx="0.7" transform="rotate(90 7.5 7.5)"/><rect x="6.15" y="0.2" width="2.7" height="3" rx="0.7" transform="rotate(135 7.5 7.5)"/><rect x="6.15" y="0.2" width="2.7" height="3" rx="0.7" transform="rotate(180 7.5 7.5)"/><rect x="6.15" y="0.2" width="2.7" height="3" rx="0.7" transform="rotate(225 7.5 7.5)"/><rect x="6.15" y="0.2" width="2.7" height="3" rx="0.7" transform="rotate(270 7.5 7.5)"/><rect x="6.15" y="0.2" width="2.7" height="3" rx="0.7" transform="rotate(315 7.5 7.5)"/><circle cx="7.5" cy="7.5" r="5.6"/></g><circle cx="7.5" cy="7.5" r="2.3" fill="#f4f5f8"/></g></svg>
<div class="t" style="left:115px;top:339.00px;font-size:13px;color:#3d4b55;font-weight:normal;letter-spacing:-0.05px;">Settings</div>
<div class="abs" style="left:27px;top:1010px;width:1922px;height:1px;background:#b7b7b7"></div>
<div class="abs" style="left:1948px;top:0;width:1px;height:1011px;background:#b9b9b9"></div>
<div class="abs" style="left:27px;top:0;width:1px;height:1011px;background:#c1c1c1"></div>
<div class="abs" style="left:27px;top:0;width:1922px;height:1px;background:#cdcecb"></div>

<div class="abs" style="left:53px;top:5px;width:44px;height:42px;box-sizing:border-box;border:3px solid #f23d3d;box-shadow:0 4px 5px rgba(0,0,0,0.25)"></div>
<div class="abs" style="left:1px;top:6px;width:40px;height:40px;border-radius:50%;background:#fb4141;box-shadow:3px 3px 5px rgba(0,0,0,0.3)"></div>
<svg class="i" style="left:0;top:0" width="42" height="42"><path d="M21.7 16 H24.3 V37 H21.6 V20 Q19.4 22.2 15.8 23.3 V20.6 Q19.6 19.2 21.7 16 Z" fill="#fff"/></svg>
<div class="abs" style="left:59px;top:321px;width:144px;height:49px;box-sizing:border-box;border:3px solid #f23d3d;box-shadow:0 3px 4px rgba(0,0,0,0.25), inset 2px 3px 4px rgba(0,0,0,0.22)"></div>
<div class="abs" style="left:215px;top:333px;width:40px;height:40px;border-radius:50%;background:#fb4343;box-shadow:1px 4px 6px rgba(0,0,0,0.38)"></div>
<div class="t" style="left:215.3px;top:337px;width:40px;text-align:center;font-size:30px;line-height:34px;color:#fff;text-shadow:0.4px 0 0 #fff">2</div>

</body></html>
